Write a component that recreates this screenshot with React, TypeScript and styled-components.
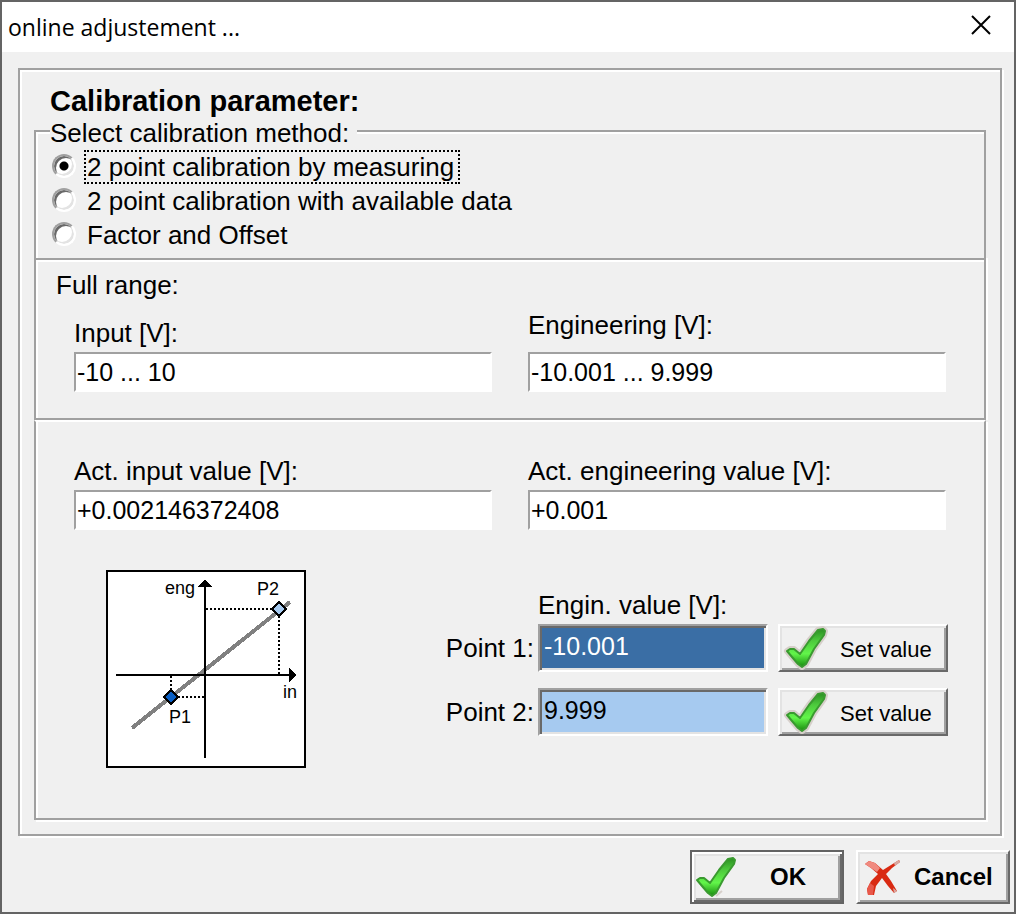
import React from "react";
import styled, { createGlobalStyle } from "styled-components";

const GlobalStyle = createGlobalStyle`
  *, *::before, *::after { box-sizing: border-box; }
  body { margin: 0; background: #f0f0f0; }
  button, input { font: inherit; color: inherit; margin: 0; border-radius: 0; }
`;

const Dialog = styled.div`
  display: flex;
  flex-direction: column;
  min-height: 100vh;
  border: 2px solid #646464;
  background: #f0f0f0;
  color: #000;
  font: 26px/30px "Liberation Sans", Arial, sans-serif;
`;

const TitleBar = styled.header`
  display: flex;
  align-items: center;
  justify-content: space-between;
  height: 50px;
  padding: 0 22px 0 6px;
  background: #fff;
`;

const Title = styled.h1`
  margin: 0;
  font: 23px/30px "Open Sans", "Noto Sans", sans-serif;
`;

const CloseButton = styled.button`
  display: flex;
  padding: 0 0 4px;
  border: 0;
  background: none;
`;

const Frame = styled.main`
  margin: 16px 12px 14px 16px;
  padding: 18px 14px 14px;
  border: 2px solid #a0a0a0;
  box-shadow: 2px 2px 0 #fff, inset 2px 2px 0 #fff;
`;

const Heading = styled.h2`
  margin: 0;
  padding-left: 16px;
  font-size: 29px;
  line-height: 26px;
`;

const MethodGroup = styled.fieldset`
  min-width: 0;
  margin: 0;
  padding: 2px 14px 6px;
  border: 2px solid #a0a0a0;
  box-shadow: inset 2px 2px 0 #fff;
`;

const Legend = styled.legend`
  padding: 4px 8px 0 0;
  background: #f0f0f0;
`;

const RadioRow = styled.div`
  display: flex;
  align-items: center;
  gap: 8px;
  height: 34px;
`;

const Radio = styled.input`
  appearance: none;
  width: 24px;
  height: 24px;
  margin: 0 0 2px 2px;
  border: 2px solid;
  border-color: #a0a0a0 #fff #fff #a0a0a0;
  border-radius: 50%;
  background: #fff;
  box-shadow: inset 2px 2px 0 #696969, inset -2px -2px 0 #e3e3e3;
  &:checked {
    background: radial-gradient(circle, #000 4px, #fff 5px);
  }
`;

const RadioLabel = styled.label<{ $focused?: boolean }>`
  padding: 0 4px 0 1px;
  line-height: 30px;
  border: 2px dotted ${(p) => (p.$focused ? "#000" : "transparent")};
`;

const Section = styled.section<{ $open?: boolean }>`
  margin-top: ${(p) => (p.$open ? "0" : "-2px")};
  border: 2px solid #a0a0a0;
  border-top-color: ${(p) => (p.$open ? "#fff" : "#a0a0a0")};
  box-shadow: ${(p) =>
    p.$open ? "2px 2px 0 #fff, inset 2px 0 0 #fff" : "2px 0 0 #fff, inset 2px 2px 0 #fff"};
  padding: ${(p) => (p.$open ? "34px 0 50px" : "10px 0 26px")};
`;

const SectionTitle = styled.h3`
  margin: 0 0 10px;
  padding-left: 20px;
  font-size: 26px;
  font-weight: normal;
`;

const FieldGrid = styled.div`
  display: grid;
  grid-template-columns: 1fr 1fr;
  align-items: end;
  gap: 36px;
  padding: 0 38px;
`;

const Field = styled.div<{ $gap: number }>`
  display: flex;
  flex-direction: column;
  gap: ${(p) => p.$gap}px;
  min-width: 0;
`;

const TextBox = styled.input`
  width: 100%;
  height: 40px;
  padding: 0 1px;
  border: 2px solid;
  border-color: #a0a0a0 #fff #fff #a0a0a0;
  background: #fff;
  font-size: 25px;
`;

const PointsRow = styled.div`
  display: flex;
  align-items: flex-start;
  justify-content: space-between;
  margin-top: 40px;
  padding: 0 36px 0 70px;
`;

const Chart = styled.svg`
  flex: none;
  border: 2px solid #000;
  background: #fff;
  font-size: 18px;
`;

const PointGrid = styled.div`
  display: grid;
  grid-template-columns: auto 230px 180px;
  align-items: center;
  row-gap: 16px;
  margin-top: 20px;
`;

const PointHeader = styled.div`
  grid-column: 2 / -1;
  margin-bottom: -12px;
`;

const PointLabel = styled.label`
  padding-right: 4px;
`;

const PointBox = styled.input<{ $fill: string; $ink: string }>`
  width: 100%;
  height: 48px;
  padding: 0 4px 4px;
  border: 2px solid;
  border-color: #a0a0a0 #fff #fff #a0a0a0;
  box-shadow: inset 2px 2px 0 #696969, inset -2px -2px 0 #e3e3e3;
  background: ${(p) => p.$fill};
  color: ${(p) => p.$ink};
  font-size: 25px;
`;

const Button = styled.button`
  display: flex;
  align-items: center;
  border: 2px solid;
  border-color: #fff #696969 #696969 #fff;
  box-shadow: inset 2px 2px 0 #e3e3e3, inset -2px -2px 0 #a0a0a0;
  background: #f0f0f0;
`;

const SetButton = styled(Button)`
  height: 48px;
  gap: 14px;
  margin-left: 10px;
  padding: 0 0 0 6px;
  font-size: 22px;
`;

const SetCaption = styled.span`
  padding-top: 4px;
  white-space: nowrap;
`;

const Footer = styled.footer`
  display: flex;
  justify-content: flex-end;
  gap: 12px;
  padding: 0 4px 8px;
`;

const FooterButton = styled(Button)<{ $default?: boolean }>`
  width: 154px;
  height: 54px;
  padding: 0 0 0 ${(p) => (p.$default ? "4px" : "6px")};
  gap: ${(p) => (p.$default ? "34px" : "12px")};
  font-size: 24px;
  font-weight: bold;
  ${(p) =>
    p.$default &&
    `border-color: #646464;
     box-shadow: inset 2px 2px 0 #fff, inset -2px -2px 0 #696969, inset 4px 4px 0 #e3e3e3, inset -4px -4px 0 #a0a0a0;`}
`;

const checkShape =
  "M1 23L4 21L8 21L14 26L23 13L32 2L37 1L39 3L38 7L28 21L20 36L16 39L12 36L6 29Z";

const Check = ({ halo }: { halo?: boolean }) => (
  <svg width="40" height="40" viewBox="0 0 40 40" overflow="visible" aria-hidden="true">
    <defs>
      <linearGradient id="leaf" x1="0" y1="0" x2="0" y2="1">
        <stop offset="0" stopColor="#2b8f22" />
        <stop offset="0.3" stopColor="#4cc83c" />
        <stop offset="0.65" stopColor="#62f54a" />
        <stop offset="1" stopColor="#168a0c" />
      </linearGradient>
    </defs>
    {halo && (
      <path
        d={checkShape}
        fill="#d6cfca"
        stroke="#d6cfca"
        strokeWidth="6"
        strokeLinejoin="round"
      />
    )}
    <path
      d={checkShape}
      fill="url(#leaf)"
      stroke="#3a9a30"
      strokeWidth="2"
      strokeLinejoin="round"
    />
    {!halo && <path d="M20 39L26 34" stroke="#d6cfca" strokeWidth="2" />}
  </svg>
);

const Cross = () => (
  <svg width="38" height="38" viewBox="0 -2 38 38" aria-hidden="true">
    <path d="M1 4L5 1L11 3L19 10L27 5L35 0L36 2L28 8L22 14L27 21L33 31L30 33L24 26L18 18L12 26L10 35L4 35L3 29L7 21L14 14L7 8Z" fill="#d92a12" />
    <path d="M1 4L5 1L11 3L16 8L13 12L7 8Z" fill="#f08a80" />
    <path d="M4 35L3 29L6 23L10 26L9 35Z" fill="#e8584a" />
    <path d="M30 3L35 0L36 2L31 6Z M29 28L33 31L30 33Z" fill="#d9a8a0" />
  </svg>
);

const methods = [
  "2 point calibration by measuring",
  "2 point calibration with available data",
  "Factor and Offset",
];

const points = [
  { label: "Point 1:", value: "-10.001", fill: "#3a6ea5", ink: "#fff" },
  { label: "Point 2:", value: "9.999", fill: "#a6caf0", ink: "#000" },
];

const LabeledField = ({ id, label, value, gap = 4 }: { id: string; label: string; value: string; gap?: number }) => (
  <Field $gap={gap}>
    <label htmlFor={id}>{label}</label>
    <TextBox id={id} defaultValue={value} />
  </Field>
);

const CalibrationChart = () => (
  <Chart width="200" height="198" viewBox="0 0 196 194" role="img" aria-label="Calibration line through P1 and P2">
    <g shapeRendering="crispEdges" stroke="#000" strokeWidth="2" fill="none">
      <path d="M24 156L182 30" stroke="#808080" strokeWidth="4" />
      <path d="M8 103H186M97 10V186" />
      <path d="M98 37H164M171 44V102M63 104V118M70 125H96" strokeDasharray="2 2" />
      <path d="M97 9L102 14H92Z M187 103L182 98V108Z" fill="#000" />
      <path d="M171 30L178 37L171 44L164 37Z" fill="#a6caf0" />
      <path d="M63 118L70 125L63 132L56 125Z" fill="#0a5fc4" />
    </g>
    <text x="57" y="22">eng</text>
    <text x="149" y="23">P2</text>
    <text x="175" y="126">in</text>
    <text x="61" y="151">P1</text>
  </Chart>
);

export default function App() {
  return (
    <>
      <GlobalStyle />
      <Dialog>
        <TitleBar>
          <Title>online adjustement ...</Title>
          <CloseButton aria-label="Close">
            <svg width="22" height="22" viewBox="0 0 22 22" fill="none" stroke="#000" strokeWidth="2">
              <path d="M2 2L20 20M20 2L2 20" />
            </svg>
          </CloseButton>
        </TitleBar>
        <Frame>
          <Heading>Calibration parameter:</Heading>
          <MethodGroup>
            <Legend>Select calibration method:</Legend>
            {methods.map((m, i) => (
              <RadioRow key={m}>
                <Radio type="radio" name="method" id={`method-${i}`} defaultChecked={i === 0} />
                <RadioLabel htmlFor={`method-${i}`} $focused={i === 0}>
                  {m}
                </RadioLabel>
              </RadioRow>
            ))}
          </MethodGroup>
          <Section>
            <SectionTitle>Full range:</SectionTitle>
            <FieldGrid>
              <LabeledField id="range-in" label="Input [V]:" value="-10 ... 10" />
              <LabeledField id="range-eng" label="Engineering [V]:" value="-10.001 ... 9.999" gap={12} />
            </FieldGrid>
          </Section>
          <Section $open>
            <FieldGrid>
              <LabeledField id="act-in" label="Act. input value [V]:" value="+0.002146372408" />
              <LabeledField id="act-eng" label="Act. engineering value [V]:" value="+0.001" />
            </FieldGrid>
            <PointsRow>
              <CalibrationChart />
              <PointGrid>
                <PointHeader>Engin. value [V]:</PointHeader>
                {points.map((p, i) => (
                  <React.Fragment key={p.label}>
                    <PointLabel htmlFor={`point-${i}`}>{p.label}</PointLabel>
                    <PointBox id={`point-${i}`} defaultValue={p.value} $fill={p.fill} $ink={p.ink} />
                    <SetButton>
                      <Check halo />
                      <SetCaption>Set value</SetCaption>
                    </SetButton>
                  </React.Fragment>
                ))}
              </PointGrid>
            </PointsRow>
          </Section>
        </Frame>
        <Footer>
          <FooterButton $default>
            <Check />
            OK
          </FooterButton>
          <FooterButton>
            <Cross />
            Cancel
          </FooterButton>
        </Footer>
      </Dialog>
    </>
  );
}
